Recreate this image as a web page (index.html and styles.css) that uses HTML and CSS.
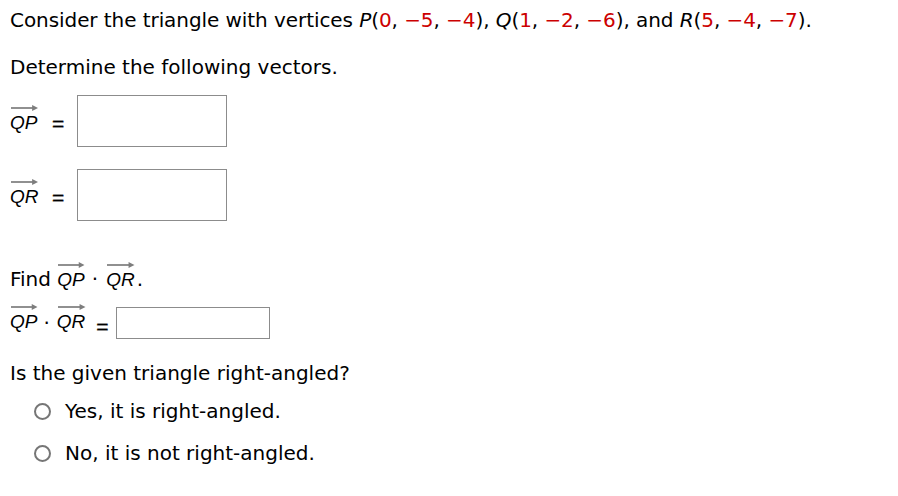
FILE: index.html
```html
<!DOCTYPE html>
<html>
<head>
<meta charset="utf-8">
<link rel="stylesheet" href="styles.css">
</head>
<body>
<div class="page">
  <p class="line first">Consider the triangle with vertices <i>P</i>(<span class="r">0</span>, <span class="r">−5</span>, <span class="r">−4</span>), <i>Q</i>(<span class="r">1</span>, <span class="r">−2</span>, <span class="r">−6</span>), and <i>R</i>(<span class="r">5</span>, <span class="r">−4</span>, <span class="r">−7</span>).</p>
  <p class="line det">Determine the following vectors.</p>

  <div class="vrow">
    <span class="vec rowvec"><svg class="arr" viewBox="0 0 30 6" preserveAspectRatio="none"><line x1="0" y1="3" x2="26" y2="3"/><path d="M23.5 0 L30 3 L23.5 6 Z"/></svg><span class="vl">QP</span></span>
    <span class="eq">=</span>
    <span class="box big"></span>
  </div>
  <div class="vrow second">
    <span class="vec rowvec"><svg class="arr" viewBox="0 0 30 6" preserveAspectRatio="none"><line x1="0" y1="3" x2="26" y2="3"/><path d="M23.5 0 L30 3 L23.5 6 Z"/></svg><span class="vl">QR</span></span>
    <span class="eq">=</span>
    <span class="box big"></span>
  </div>

  <p class="line find">Find <span class="vec"><svg class="arr" viewBox="0 0 30 6" preserveAspectRatio="none"><line x1="0" y1="3" x2="26" y2="3"/><path d="M23.5 0 L30 3 L23.5 6 Z"/></svg><span class="vl">QP</span></span><span class="fdot">·</span><span class="vec"><svg class="arr" viewBox="0 0 30 6" preserveAspectRatio="none"><line x1="0" y1="3" x2="26" y2="3"/><path d="M23.5 0 L30 3 L23.5 6 Z"/></svg><span class="vl">QR</span></span>.</p>

  <div class="dotrow">
    <span class="vec"><svg class="arr" viewBox="0 0 30 6" preserveAspectRatio="none"><line x1="0" y1="3" x2="26" y2="3"/><path d="M23.5 0 L30 3 L23.5 6 Z"/></svg><span class="vl">QP</span></span>
    <span class="dot">·</span>
    <span class="vec"><svg class="arr" viewBox="0 0 30 6" preserveAspectRatio="none"><line x1="0" y1="3" x2="26" y2="3"/><path d="M23.5 0 L30 3 L23.5 6 Z"/></svg><span class="vl">QR</span></span>
    <span class="eq2">=</span>
    <span class="box small"></span>
  </div>

  <p class="line q">Is the given triangle right-angled?</p>
  <label class="opt first-opt"><input class="radio" type="radio" name="ra"><span>Yes, it is right-angled.</span></label>
  <label class="opt second-opt"><input class="radio" type="radio" name="ra"><span>No, it is not right-angled.</span></label>
</div>
</body>
</html>
```
FILE: styles.css
```css
html, body {
  margin: 0;
  padding: 0;
  background: #fff;
}
body {
  font-family: "DejaVu Sans", Verdana, sans-serif;
  font-size: 20px;
  color: #000;
}
.page {
  padding: 8px 10px;
  display: flex;
  flex-direction: column;
  align-items: flex-start;
}
.line {
  margin: 0;
  line-height: 24px;
}
.first { letter-spacing: -0.07px; }
.r { color: #cc0000; }
.det { margin-top: 23px; }

.vec {
  position: relative;
  display: inline-block;
  font-family: "Liberation Sans", Arial, sans-serif;
  font-style: italic;
  font-size: 19px;
  line-height: 20px;
}
.vl { padding-right: 2px; }
.arr {
  position: absolute;
  left: 1px;
  top: -8px;
  width: calc(100% - 3px);
  height: 6px;
  overflow: visible;
}
.arr line {
  stroke: #7d7d7d;
  stroke-width: 1.7;
  fill: none;
  vector-effect: non-scaling-stroke;
}
.arr path {
  fill: #7d7d7d;
  stroke: none;
}

.vrow {
  display: flex;
  align-items: center;
  margin-top: 16px;
}
.vrow.second { margin-top: 22px; }
.vec.rowvec {
  margin-top: 4px;
  width: 30px;
}
.eq {
  margin-left: 12px;
  margin-top: 6px;
  font-size: 21px;
  line-height: 20px;
  font-family: "Liberation Sans", Arial, sans-serif;
  -webkit-text-stroke: 0.4px #000;
}
.box {
  display: block;
  box-sizing: border-box;
  border: 1px solid #8c8c8c;
  background: #fff;
}
.box.big {
  width: 150px;
  height: 52px;
  margin-left: 13px;
}

.find { margin-top: 46px; }
.fdot { padding: 0 8px 0 5px; }

.dotrow {
  display: flex;
  align-items: center;
  margin-top: 16px;
}
.dotrow .vec { margin-top: -2px; }
.dot { margin: 0 7px 0 4px; line-height: 20px; }
.eq2 {
  margin-left: 9px;
  margin-top: 7px;
  font-size: 21px;
  line-height: 20px;
  font-family: "Liberation Sans", Arial, sans-serif;
  -webkit-text-stroke: 0.4px #000;
}
.box.small {
  width: 154px;
  height: 32px;
  margin-left: 7px;
}

.q { margin-top: 22px; }
.opt {
  display: flex;
  align-items: center;
  margin-left: 24px;
  line-height: 24px;
}
.first-opt { margin-top: 14px; }
.second-opt { margin-top: 18px; }
.radio {
  -webkit-appearance: none;
  appearance: none;
  box-sizing: border-box;
  margin: 0 14px 0 0;
  width: 17px;
  height: 17px;
  border: 2px solid #767676;
  border-radius: 50%;
  background: #fff;
}
```
